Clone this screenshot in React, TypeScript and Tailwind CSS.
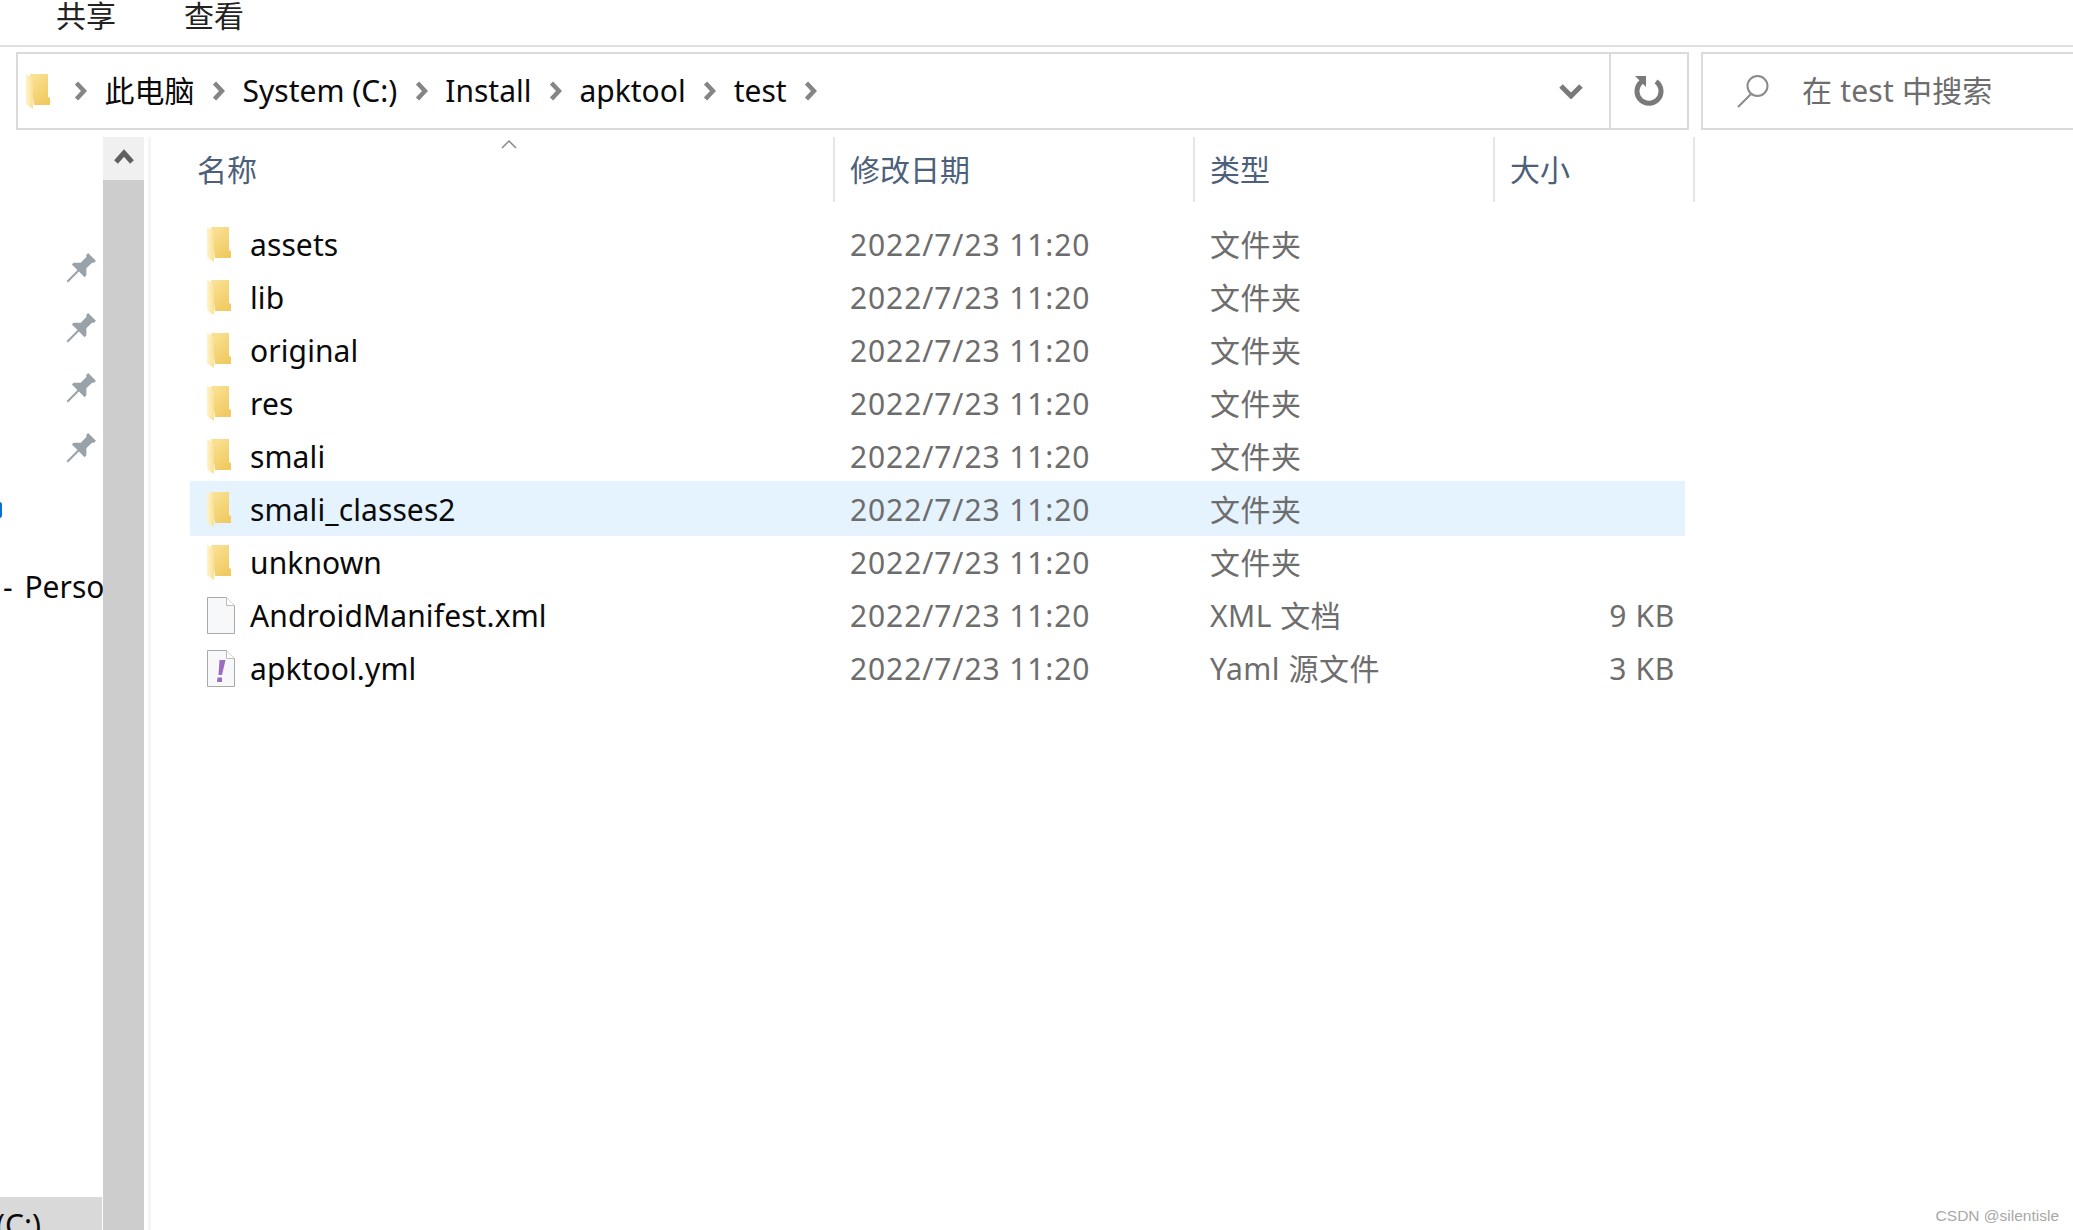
import * as React from "react";

const FONT = "font-['Noto_Sans','Noto_Sans_CJK_SC',sans-serif]";

const files = [
  { name: "assets", type: "文件夹", size: "", kind: "folder" },
  { name: "lib", type: "文件夹", size: "", kind: "folder" },
  { name: "original", type: "文件夹", size: "", kind: "folder" },
  { name: "res", type: "文件夹", size: "", kind: "folder" },
  { name: "smali", type: "文件夹", size: "", kind: "folder" },
  { name: "smali_classes2", type: "文件夹", size: "", kind: "folder", selected: true },
  { name: "unknown", type: "文件夹", size: "", kind: "folder" },
  { name: "AndroidManifest.xml", type: "XML 文档", size: "9 KB", kind: "file" },
  { name: "apktool.yml", type: "Yaml 源文件", size: "3 KB", kind: "yaml" },
];

function FolderIcon({ id }: { id: string }) {
  return (
    <svg width="24" height="35" viewBox="0 0 24 35" className="shrink-0">
      <defs>
        <linearGradient id={id + "a"} x1="0" y1="0" x2="0.6" y2="1">
          <stop offset="0" stopColor="#fbe39a" />
          <stop offset="1" stopColor="#f1cb62" />
        </linearGradient>
        <linearGradient id={id + "b"} x1="0" y1="0" x2="1" y2="0">
          <stop offset="0" stopColor="#fff4c8" />
          <stop offset="1" stopColor="#fbe094" />
        </linearGradient>
      </defs>
      <path d="M4 0h18v23l2 1v7H8z" fill={`url(#${id}a)`} />
      <path d="M0 0l7 4v31l-6-4-1-1z" fill={`url(#${id}b)`} />
    </svg>
  );
}

function PlainFile({ mark }: { mark?: boolean }) {
  return (
    <svg width="28" height="37" viewBox="0 0 28 37" className="shrink-0">
      <path d="M.5.5h19l8 8v28H.5z" fill="#f7f8fa" stroke="#a9a9a9" />
      <path d="M19.5.5v8h8" fill="#ffffff" stroke="#bdbdbd" />
      {mark && <path d="M12.500 10h6l-3.500 15h-3.500zM10.500 27.500h4.500v4.500H10z" fill="#9b6cc0" />}
    </svg>
  );
}

function Pin() {
  return (
    <svg width="26" height="26" viewBox="0 0 26 26" className="block overflow-visible">
      <path
        transform="rotate(45 13 13)"
        d="M7.500 -4H18.500V-1.500L17 0V8L22 13V15.500H14V31H12V15.500H4V13L9 8V0L7.500 -1.500Z"
        fill="#98a2a8"
      />
    </svg>
  );
}

function Crumb({ children }: { children?: React.ReactNode }) {
  return (
    <>
      {children && <span className="text-[30px] leading-none text-[#0a0a0a]">{children}</span>}
      <svg width="13" height="20" viewBox="0 0 13 20" className="shrink-0">
        <path d="M2.500 2l7.500 8-7.500 8" fill="none" stroke="#858585" strokeWidth="4.500" />
      </svg>
    </>
  );
}

export default function App() {
  return (
    <div className={`${FONT} relative flex h-[1230px] w-[2073px] flex-col overflow-hidden bg-white`}>
      <div className="flex h-[47px] shrink-0 items-start gap-[68px] overflow-hidden border-b-2 border-[#e1e1e1] pl-[56px]">
        <span className="-mt-[6px] text-[30px] leading-[44px] text-[#222]">共享</span>
        <span className="-mt-[6px] text-[30px] leading-[44px] text-[#222]">查看</span>
      </div>

      <div className="mt-[5px] flex h-[78px] shrink-0 pl-[16px]">
        <div className="flex w-[1673px] border-2 border-[#dadada]">
          <div className="flex flex-1 items-center pl-[8px]">
            <FolderIcon id="crumb" />
            <div className="ml-[24px] flex items-center gap-[17.5px]">
              <Crumb />
              <Crumb>此电脑</Crumb>
              <Crumb>System (C:)</Crumb>
              <Crumb>Install</Crumb>
              <Crumb>apktool</Crumb>
              <Crumb>test</Crumb>
            </div>
          </div>
          <div className="flex w-[70px] items-center justify-center pr-[6px]">
            <svg width="24" height="16" viewBox="0 0 24 16">
              <path d="M2 3l10 10L22 3" fill="none" stroke="#7a7a7a" strokeWidth="5" />
            </svg>
          </div>
          <div className="flex w-[78px] items-center justify-center border-l-2 border-[#dadada]">
            <svg width="30" height="32" viewBox="0 0 30 32">
              <path d="M8 6.500A12 12 0 1 0 22 6.500" fill="none" stroke="#7a7a7a" strokeWidth="5" />
              <path d="M1 1h11v11z" fill="#7a7a7a" />
            </svg>
          </div>
        </div>
        <div className="ml-[12px] flex flex-1 items-center border-y-2 border-l-2 border-[#dadada] pl-[34px]">
          <svg width="32" height="34" viewBox="0 0 32 34" className="shrink-0">
            <circle cx="20.500" cy="12" r="10" fill="none" stroke="#8a8a8a" strokeWidth="2" />
            <path d="M14 20L1 33" stroke="#8a8a8a" strokeWidth="2" />
          </svg>
          <span className="ml-[33px] text-[30px] leading-none tracking-[0.2px] text-[#6d6d6d]">在 test 中搜索</span>
        </div>
      </div>

      <div className="mt-[7px] flex min-h-0 flex-1">
        <div className="relative w-[103px] shrink-0 overflow-hidden">
          <div className="flex flex-col items-end gap-[34px] pr-[10px] pt-[119px]">
            <Pin />
            <Pin />
            <Pin />
            <Pin />
          </div>
          <div className="absolute left-[-3px] top-[365px] h-[16px] w-[5px] rounded-full bg-[#0a6fd0]" />
          <div className="absolute left-[3px] top-[428px] whitespace-nowrap text-[30px] leading-[44px] text-[#0a0a0a] [word-spacing:4px]">- Perso</div>
          <div className="absolute bottom-0 left-0 h-[33px] w-[102px] overflow-hidden bg-[#d9d9d9] pt-[6px] text-[30px] leading-[44px] text-[#0a0a0a]">
            <span className="-ml-[4px]">(C:)</span>
          </div>
        </div>

        <div className="w-[41px] shrink-0 bg-[#cdcdcd]">
          <div className="flex h-[43px] items-center justify-center bg-[#f0f0f0] pb-[6px]">
            <svg width="20" height="18" viewBox="0 0 20 18">
              <path d="M2 15l8-9 8 9" fill="none" stroke="#606060" strokeWidth="5" />
            </svg>
          </div>
        </div>
        <div className="ml-[4px] w-[3px] shrink-0 bg-[#f5f5f5]" />

        <div className="min-w-0 flex-1">
          <div className="relative grid h-[65px] w-[1544px] grid-cols-[684px_360px_300px_200px] text-[30px] text-[#4c607a]">
            <div className="flex items-center border-r-2 border-[#e5e5e5] pl-[46px]">名称</div>
            <div className="flex items-center border-r-2 border-[#e5e5e5] pl-[15px]">修改日期</div>
            <div className="flex items-center border-r-2 border-[#e5e5e5] pl-[15px]">类型</div>
            <div className="flex items-center border-r-2 border-[#e5e5e5] pl-[15px]">大小</div>
            <svg width="16" height="9" viewBox="0 0 16 9" className="absolute left-[350px] top-[3px]">
              <path d="M1 8l7-7 7 7" fill="none" stroke="#8a8a8a" strokeWidth="1.500" />
            </svg>
          </div>

          <div className="ml-[39px] mt-[16px] w-[1495px] text-[30px]">
            {files.map((f, i) => (
              <div
                key={f.name}
                className={`grid grid-cols-[645px_360px_300px_190px] items-center ${
                  f.selected ? "-mt-[2px] h-[55px] bg-[#e5f3ff] pt-[2px]" : "h-[53px]"
                }`}
              >
                <div className="flex items-center pl-[17px] tracking-[0.1px] text-[#0a0a0a]">
                  <div className="flex w-[43px] shrink-0">
                    {f.kind === "folder" ? <FolderIcon id={"f" + i} /> : <PlainFile mark={f.kind === "yaml"} />}
                  </div>
                  <span>{f.name}</span>
                </div>
                <div className="pl-[15px] tracking-[0.9px] text-[#6d6d6d]">2022/7/23 11:20</div>
                <div className="pl-[15px] tracking-[0.5px] text-[#6d6d6d]">{f.type}</div>
                <div className="pr-[10px] text-right tracking-[0.7px] text-[#6d6d6d]">{f.size}</div>
              </div>
            ))}
          </div>
        </div>
      </div>

      <div className="absolute bottom-[5px] right-[14px] font-['Liberation_Sans',sans-serif] text-[15.5px] leading-[18px] text-[#a8a8a8]">
        CSDN @silentisle
      </div>
    </div>
  );
}
